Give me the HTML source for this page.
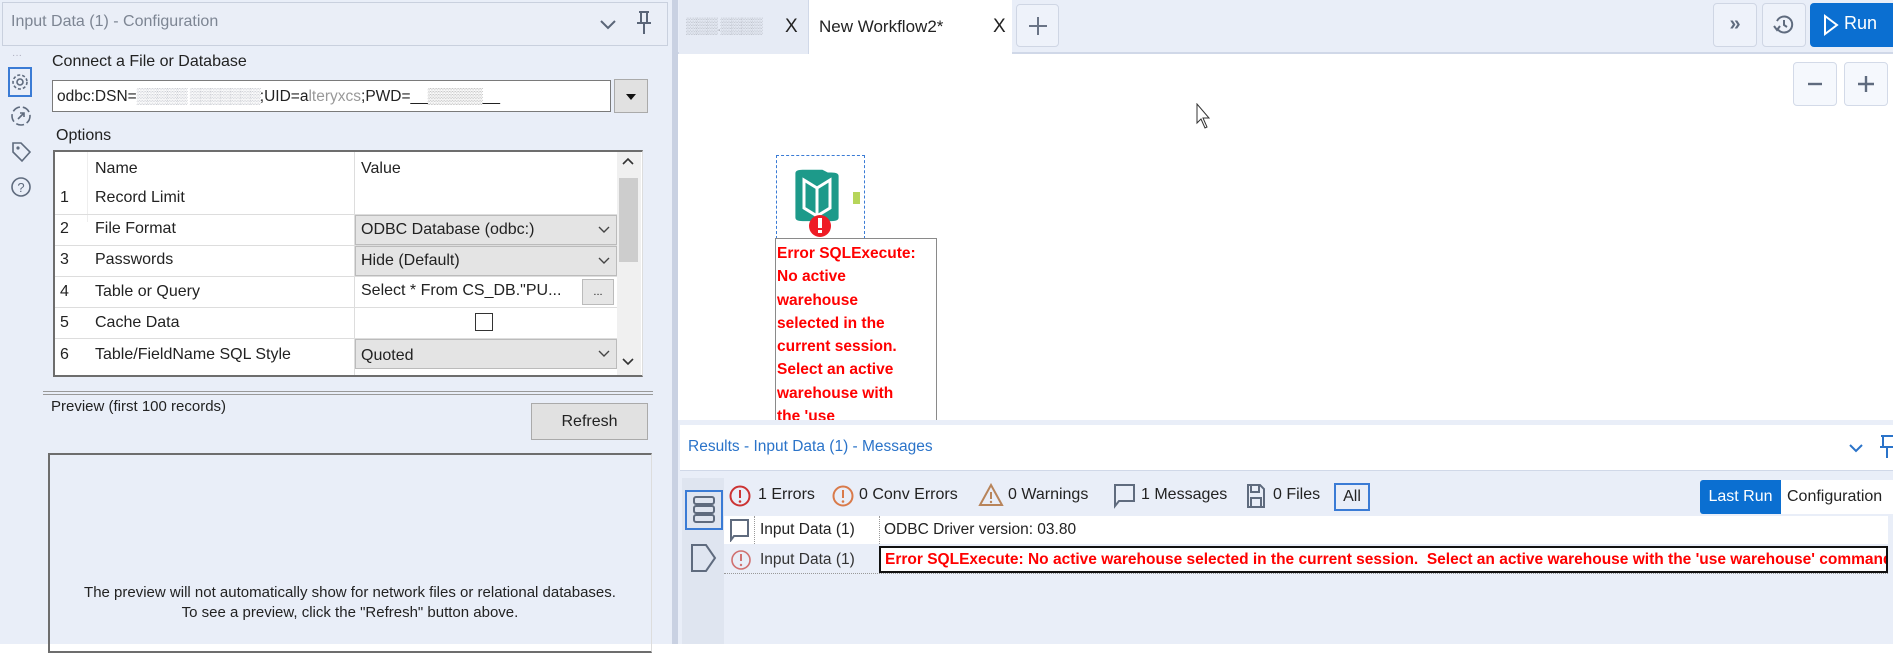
<!DOCTYPE html>
<html><head><meta charset="utf-8"><style>
*{box-sizing:border-box;margin:0;padding:0}
body{width:1893px;height:644px;overflow:hidden;background:#fff;font-family:"Liberation Sans",sans-serif;font-size:16px;color:#222;position:relative}
.a{position:absolute}
.t{position:absolute;white-space:nowrap}
</style></head><body>
<!-- left panel -->
<div class="a" style="left:0;top:0;width:672px;height:644px;background:#e9eef8"></div>
<div class="a" style="left:2px;top:2px;width:666px;height:44px;background:#eaeef7;border:1px solid #c9d0de"></div>
<div class="t" style="left:11px;top:13px;color:#7d8593;font-size:16px">Input Data (1) - Configuration</div>
<svg class="a" style="left:598px;top:14px" width="20" height="20"><path d="M3 7 L10 14 L17 7" stroke="#5a6578" stroke-width="2" fill="none"/></svg>
<svg class="a" style="left:633px;top:10px" width="22" height="26"><path d="M6 2 H16 M8 2 V12 M14 2 V12 M4 13 H18 M11 13 V24" stroke="#5a6578" stroke-width="2" fill="none"/></svg>
<div class="a" style="left:672px;top:0;width:6px;height:644px;background:#c9d1e2"></div>
<!-- icon strip -->
<div class="t" style="left:12px;top:50px;color:#aab;font-size:10px">···</div>
<div class="a" style="left:8px;top:67px;width:24px;height:30px;border:2px solid #3a7bd5"></div>
<svg class="a" style="left:10px;top:71px" width="20" height="22"><circle cx="10" cy="11" r="3" stroke="#5f6b7e" stroke-width="1.6" fill="none"/><circle cx="10" cy="11" r="7" stroke="#5f6b7e" stroke-width="1.6" fill="none" stroke-dasharray="3 2"/></svg>
<svg class="a" style="left:10px;top:104px" width="22" height="24"><circle cx="11" cy="12" r="9" stroke="#5f6b7e" stroke-width="1.6" fill="none" stroke-dasharray="8 3"/><path d="M8 15 L14 9 M10 9 H14 V13" stroke="#5f6b7e" stroke-width="1.6" fill="none"/></svg>
<svg class="a" style="left:10px;top:140px" width="22" height="24"><path d="M3 3 H11 L20 12 L12 21 L3 12 Z" stroke="#5f6b7e" stroke-width="1.6" fill="none"/><circle cx="8" cy="8" r="1.6" fill="#5f6b7e"/></svg>
<svg class="a" style="left:10px;top:175px" width="22" height="24"><circle cx="11" cy="12" r="9" stroke="#5f6b7e" stroke-width="1.6" fill="none"/><text x="11" y="17" font-size="13" text-anchor="middle" fill="#5f6b7e" font-family="Liberation Sans">?</text></svg>
<div class="t" style="left:52px;top:53px">Connect a File or Database</div>
<div class="a" style="left:52px;top:80px;width:559px;height:32px;background:#fff;border:1px solid #7a7a7a"></div>
<div class="t" style="left:57px;top:88px;font-size:15.5px">odbc:DSN=<span style="color:#b9bcc4;letter-spacing:-1px">▒▒▒▒▒ ▒▒▒▒▒▒▒</span>;UID=a<span style="color:#999">lteryxcs</span>;PWD=__<span style="color:#aaa">▒▒▒▒▒</span>__</div>
<div class="a" style="left:614px;top:79px;width:34px;height:34px;background:#e1e1e1;border:1px solid #aaa"></div>
<svg class="a" style="left:624px;top:92px" width="14" height="10"><path d="M2 2 H12 L7 8Z" fill="#111"/></svg>
<div class="t" style="left:56px;top:127px">Options</div>
<!-- grid -->
<div class="a" style="left:53px;top:150px;width:590px;height:227px;background:#fff;border:2px solid #6d6d6d;border-right:1px solid #ddd"></div>
<div class="a" style="left:617px;top:152px;width:24px;height:223px;background:#f0f0f0"></div>
<div class="a" style="left:619px;top:178px;width:19px;height:84px;background:#cdcdcd"></div>
<svg class="a" style="left:621px;top:156px" width="14" height="10"><path d="M2 8 L7 3 L12 8" stroke="#333" stroke-width="1.6" fill="none"/></svg>
<svg class="a" style="left:621px;top:357px" width="14" height="10"><path d="M2 2 L7 7 L12 2" stroke="#333" stroke-width="1.6" fill="none"/></svg>
<div class="a" style="left:354px;top:152px;width:1px;height:223px;background:#ddd"></div>
<div class="a" style="left:87px;top:152px;width:1px;height:70px;background:#eee"></div>
<div class="t" style="left:95px;top:160px">Name</div><div class="t" style="left:361px;top:160px">Value</div>
<div class="t" style="left:60px;top:189px">1</div><div class="t" style="left:95px;top:189px">Record Limit</div>
<div class="a" style="left:55px;top:214px;width:562px;height:1px;background:#ddd"></div>
<div class="t" style="left:60px;top:220px">2</div><div class="t" style="left:95px;top:220px">File Format</div>
<div class="a" style="left:355px;top:215px;width:262px;height:30px;background:#e4e4e4;border:1px solid #bbb"></div>
<div class="t" style="left:361px;top:221px">ODBC Database (odbc:)</div>
<div class="a" style="left:55px;top:245px;width:562px;height:1px;background:#ddd"></div>
<div class="t" style="left:60px;top:251px">3</div><div class="t" style="left:95px;top:251px">Passwords</div>
<div class="a" style="left:355px;top:246px;width:262px;height:30px;background:#e4e4e4;border:1px solid #bbb"></div>
<div class="t" style="left:361px;top:252px">Hide (Default)</div>
<div class="a" style="left:55px;top:276px;width:562px;height:1px;background:#ddd"></div>
<div class="t" style="left:60px;top:283px">4</div><div class="t" style="left:95px;top:283px">Table or Query</div>
<div class="t" style="left:361px;top:282px">Select * From CS_DB."PU...</div>
<div class="a" style="left:582px;top:279px;width:32px;height:26px;background:#e6e6e6;border:1px solid #bbb;font-size:11px;text-align:center;line-height:24px">...</div>
<div class="a" style="left:55px;top:307px;width:562px;height:1px;background:#ddd"></div>
<div class="t" style="left:60px;top:314px">5</div><div class="t" style="left:95px;top:314px">Cache Data</div>
<div class="a" style="left:475px;top:313px;width:18px;height:18px;border:1px solid #333;background:#fff"></div>
<div class="a" style="left:55px;top:338px;width:562px;height:1px;background:#ddd"></div>
<div class="t" style="left:60px;top:346px">6</div><div class="t" style="left:95px;top:346px">Table/FieldName SQL Style</div>
<div class="a" style="left:355px;top:339px;width:262px;height:30px;background:#e4e4e4;border:1px solid #bbb"></div>
<div class="t" style="left:361px;top:347px">Quoted</div>
<svg class="a" style="left:597px;top:222px" width="14" height="150"><path d="M2 5 L7 10 L12 5 M2 36 L7 41 L12 36 M2 129 L7 134 L12 129" stroke="#444" stroke-width="1.4" fill="none"/></svg>
<!-- splitter -->
<div class="a" style="left:43px;top:391px;width:610px;height:4px;border-top:1px solid #999;border-bottom:1px solid #999"></div>
<div class="t" style="left:51px;top:398px;font-size:15px">Preview (first 100 records)</div>
<div class="a" style="left:531px;top:403px;width:117px;height:37px;background:#e1e1e1;border:1px solid #aaa;text-align:center;line-height:35px">Refresh</div>
<div class="a" style="left:48px;top:453px;width:604px;height:200px;border:2px solid #6d6d6d;border-right:1px solid #ddd"></div>
<div class="t" style="left:50px;width:600px;text-align:center;top:583px;font-size:15px;line-height:20px">The preview will not automatically show for network files or relational databases.<br>To see a preview, click the "Refresh" button above.</div>
<!-- tabs -->
<div class="a" style="left:678px;top:0;width:1215px;height:54px;background:#e9eef8;border-bottom:2px solid #d0d8e8"></div>
<div class="a" style="left:679px;top:0;width:130px;height:54px;background:#e6ebf5;border-right:1px solid #d0d8e8"></div>
<div class="t" style="left:686px;top:18px;color:#b5b9c2;letter-spacing:-1px">▒▒▒.▒▒▒▒</div>
<div class="t" style="left:785px;top:16px;font-size:19px">X</div>
<div class="a" style="left:809px;top:0;width:203px;height:55px;background:#fff"></div>
<div class="t" style="left:819px;top:17px;font-size:17px">New Workflow2*</div>
<div class="t" style="left:993px;top:16px;font-size:19px">X</div>
<div class="a" style="left:1016px;top:4px;width:43px;height:43px;border:1px solid #cfd6e4;border-radius:4px;background:#eef2fa"></div>
<svg class="a" style="left:1028px;top:16px" width="20" height="20"><path d="M10 1V19M1 10H19" stroke="#6a7486" stroke-width="2"/></svg>
<div class="a" style="left:1713px;top:3px;width:44px;height:44px;border:1px solid #cfd6e4;border-radius:4px;background:#eef2fa;color:#5f6b7e;text-align:center;line-height:40px;font-size:20px;font-weight:bold">»</div>
<div class="a" style="left:1762px;top:3px;width:44px;height:44px;border:1px solid #cfd6e4;border-radius:4px;background:#eef2fa"></div>
<svg class="a" style="left:1772px;top:13px" width="24" height="24"><path d="M5 15 A8 8 0 1 0 5 8" stroke="#5f6b7e" stroke-width="2" fill="none"/><path d="M2 13 L5 17 L8 13" stroke="#5f6b7e" stroke-width="2" fill="none"/><path d="M12 7V12L15 14" stroke="#5f6b7e" stroke-width="2" fill="none"/></svg>
<div class="a" style="left:1810px;top:3px;width:83px;height:44px;background:#0b6fd1;border-radius:4px 0 0 4px"></div>
<svg class="a" style="left:1822px;top:14px" width="18" height="22"><path d="M3 2 L15 11 L3 20 Z" stroke="#fff" stroke-width="2" fill="none"/></svg>
<div class="t" style="left:1844px;top:13px;color:#fff;font-size:18px">Run</div>
<!-- zoom buttons -->
<div class="a" style="left:1793px;top:62px;width:44px;height:44px;border:1px solid #d3dae8;border-radius:4px;background:#f5f8fd"></div>
<svg class="a" style="left:1805px;top:74px" width="20" height="20"><path d="M3 10H17" stroke="#5f6b7e" stroke-width="2.4"/></svg>
<div class="a" style="left:1844px;top:62px;width:44px;height:44px;border:1px solid #d3dae8;border-radius:4px;background:#f5f8fd"></div>
<svg class="a" style="left:1856px;top:74px" width="20" height="20"><path d="M10 2V18M2 10H18" stroke="#5f6b7e" stroke-width="2.4"/></svg>
<!-- cursor -->
<svg class="a" style="left:1196px;top:103px" width="16" height="28"><path d="M1 1 L1 20 L5 16 L9 25 L11 24 L7 15 L13 15 Z" fill="#fff" stroke="#333" stroke-width="1"/></svg>
<!-- node -->
<div class="a" style="left:776px;top:155px;width:89px;height:84px;border:1px dashed #3a7bd5"></div>
<svg class="a" style="left:790px;top:168px" width="70" height="74"><path d="M3 6 Q3 2 7 2 H18 L21 5 H23 Q27 5 27 9 V55 Q27 59 23 59 H7 Q3 59 3 55Z" fill="#1d9a8a" transform="scale(1.8 0.9)"/><path d="M14 12 L27 20 L40 12 V40 L27 48 L14 40Z" fill="none" stroke="#fff" stroke-width="3"/><path d="M27 20V48" stroke="#fff" stroke-width="3"/><rect x="63" y="24" width="7" height="12" fill="#b6d55a"/><circle cx="30" cy="58" r="11" fill="#ee1c25"/><rect x="28" y="50" width="4" height="10" fill="#fff"/><rect x="28" y="62" width="4" height="3" fill="#fff"/></svg>
<div class="a" style="left:775px;top:238px;width:162px;height:190px;border:1px solid #8a8a8a;border-bottom:none;background:#fff"></div>
<div class="t" style="left:777px;top:242px;color:#f00;font-weight:bold;font-size:15.5px;line-height:23.3px">Error SQLExecute:<br>No active<br>warehouse<br>selected in the<br>current session.<br>Select an active<br>warehouse with<br>the 'use</div>
<!-- results -->
<div class="a" style="left:678px;top:420px;width:1215px;height:224px;background:#e9eef8"></div>
<div class="a" style="left:680px;top:425px;width:1213px;height:46px;background:#fff;border-bottom:1px solid #d0d8e8"></div>
<div class="t" style="left:688px;top:438px;color:#2a73c9;font-size:15.5px">Results - Input Data (1) - Messages</div>
<svg class="a" style="left:1848px;top:440px" width="16" height="16"><path d="M2 5 L8 11 L14 5" stroke="#2a73c9" stroke-width="2" fill="none"/></svg>
<svg class="a" style="left:1878px;top:434px" width="15" height="26"><path d="M3 2H15M5 2V12M2 13H15M9 13V24" stroke="#2a73c9" stroke-width="2" fill="none"/></svg>
<div class="a" style="left:682px;top:478px;width:42px;height:166px;background:#dfe5f0"></div>
<div class="a" style="left:685px;top:490px;width:38px;height:40px;border:2px solid #3a7bd5"></div>
<svg class="a" style="left:692px;top:495px" width="24" height="30"><rect x="2" y="2" width="20" height="7" rx="2" stroke="#5f6b7e" stroke-width="2" fill="none"/><rect x="2" y="11" width="20" height="7" rx="2" stroke="#5f6b7e" stroke-width="2" fill="none"/><rect x="2" y="20" width="20" height="7" rx="2" stroke="#5f6b7e" stroke-width="2" fill="none"/></svg>
<svg class="a" style="left:690px;top:542px" width="28" height="32"><path d="M2 3 H16 L25 16 L16 29 H2 Z" stroke="#5f6b7e" stroke-width="2" fill="none"/></svg>
<!-- toolbar -->
<svg class="a" style="left:728px;top:484px" width="24" height="24"><circle cx="12" cy="12" r="9.5" stroke="#c33" stroke-width="2" fill="none"/><path d="M12 6V14" stroke="#c33" stroke-width="2"/><circle cx="12" cy="17.5" r="1.3" fill="#c33"/></svg>
<div class="t" style="left:758px;top:486px">1 Errors</div>
<svg class="a" style="left:831px;top:484px" width="24" height="24"><circle cx="12" cy="12" r="9.5" stroke="#d97a4a" stroke-width="2" fill="none"/><path d="M12 6V14" stroke="#d97a4a" stroke-width="2"/><circle cx="12" cy="17.5" r="1.3" fill="#d97a4a"/></svg>
<div class="t" style="left:859px;top:486px">0 Conv Errors</div>
<svg class="a" style="left:978px;top:483px" width="26" height="24"><path d="M13 2 L24 22 H2 Z" stroke="#b8845a" stroke-width="2" fill="none"/><path d="M13 9V16" stroke="#b8845a" stroke-width="2"/><circle cx="13" cy="19" r="1.2" fill="#b8845a"/></svg>
<div class="t" style="left:1008px;top:486px">0 Warnings</div>
<svg class="a" style="left:1112px;top:483px" width="24" height="26"><path d="M2 2H22V18H7L3 23V2Z" stroke="#5f6b7e" stroke-width="2" fill="none"/></svg>
<div class="t" style="left:1141px;top:486px">1 Messages</div>
<svg class="a" style="left:1246px;top:483px" width="20" height="26"><path d="M2 2H14L18 6V24H2Z M5 2V9H13V2 M5 24V15H15V24" stroke="#5f6b7e" stroke-width="2" fill="none"/></svg>
<div class="t" style="left:1273px;top:486px">0 Files</div>
<div class="a" style="left:1334px;top:483px;width:36px;height:28px;border:2px solid #3a7bd5;text-align:center;line-height:24px">All</div>
<div class="a" style="left:1700px;top:480px;width:81px;height:34px;background:#0b6fd1;color:#fff;text-align:center;line-height:34px;border-radius:3px 0 0 3px">Last Run</div>
<div class="a" style="left:1781px;top:480px;width:112px;height:34px;background:#fff;line-height:34px;padding-left:6px">Configuration</div>
<!-- rows -->
<div class="a" style="left:724px;top:516px;width:1164px;height:28px;background:#fff"></div>
<svg class="a" style="left:728px;top:518px" width="22" height="24"><path d="M2 2H20V18H6L3 22V2" stroke="#5f6b7e" stroke-width="2" fill="none"/></svg>
<div class="a" style="left:754px;top:516px;width:1px;height:58px;border-left:1px dotted #999"></div>
<div class="a" style="left:879px;top:516px;width:1px;height:58px;border-left:1px dotted #999"></div>
<div class="t" style="left:760px;top:521px;font-size:15.5px">Input Data (1)</div>
<div class="t" style="left:884px;top:521px;font-size:15.5px">ODBC Driver version: 03.80</div>
<div class="a" style="left:724px;top:545px;width:1164px;height:29px;background:#e9eef8;border-bottom:1px dotted #999"></div>
<svg class="a" style="left:730px;top:548px" width="22" height="24"><circle cx="11" cy="12" r="9" stroke="#d07070" stroke-width="1.6" fill="none"/><path d="M11 6V13" stroke="#d07070" stroke-width="2"/><circle cx="11" cy="17" r="1.2" fill="#d07070"/></svg>
<div class="t" style="left:760px;top:551px;font-size:15.5px;color:#333">Input Data (1)</div>
<div class="a" style="left:879px;top:546px;width:1009px;height:27px;background:#fff;border:2px solid #111;overflow:hidden"><div class="t" style="left:4px;top:3px;color:#f00;font-weight:bold;font-size:15.5px">Error SQLExecute: No active warehouse selected in the current session.&nbsp; Select an active warehouse with the 'use warehouse' command.</div></div>
</body></html>
